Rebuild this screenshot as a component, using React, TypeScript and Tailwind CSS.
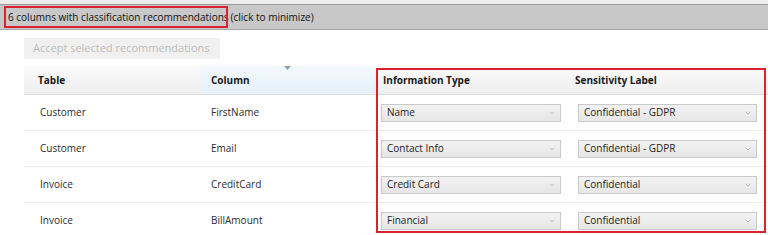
import { ChevronDown } from "lucide-react";

const rows = [
  { table: "Customer", column: "FirstName", info: "Name", label: "Confidential - GDPR" },
  { table: "Customer", column: "Email", info: "Contact Info", label: "Confidential - GDPR" },
  { table: "Invoice", column: "CreditCard", info: "Credit Card", label: "Confidential" },
  { table: "Invoice", column: "BillAmount", info: "Financial", label: "Confidential" },
];

function Dropdown({ value, width }: { value: string; width: string }) {
  return (
    <div
      className={`${width} h-[18px] flex items-center justify-between pl-[5px] pr-[4px] border border-[#c9c9c9] bg-gradient-to-b from-[#f3f3f3] to-[#e6e6e6] text-[#222]`}
    >
      <span>{value}</span>
      <ChevronDown size={8} strokeWidth={2} className="text-[#a0a0a0]" />
    </div>
  );
}

export default function App() {
  return (
    <div
      className="relative w-[768px] h-[235px] overflow-hidden bg-white text-[10px] text-[#2b2b2b]"
      style={{ fontFamily: '"Open Sans", "Noto Sans", sans-serif' }}
    >
      <div className="h-[4px] bg-[#ededed]" />
      <div className="h-[26px] flex items-center pl-[8px] bg-[#c8c8c8] border-t border-[#9c9c9c] border-b border-b-[#a8a8a8] text-[#111]">
        <span>6 columns with classification recommendations</span>
        <span className="ml-[2px]">(click to minimize)</span>
      </div>

      <div className="pl-[24px] pt-[8px]">
        <div className="w-[196px] h-[21px] flex items-center pl-[9px] bg-[#f0f0f0] text-[11px] text-[#bdbdbd]">
          Accept selected recommendations
        </div>
      </div>

      <div className="mt-[7px] ml-[24px]">
        <div className="relative h-[29px] flex items-center font-bold text-[#1a1a1a] bg-gradient-to-b from-[#fafafa] to-[#eeeeee] border-b border-[#dcdcdc]">
          <div className="w-[177px] pl-[14px]">Table</div>
          <div className="w-[176px] h-full flex items-center pl-[10px] bg-gradient-to-b from-[#f4f9fd] to-[#e4f0fa]">
            Column
          </div>
          <div className="w-[197px] pl-[6px]">Information Type</div>
          <div className="pl-[1px]">Sensitivity Label</div>
          <svg
            className="absolute left-[260px] top-[0px]"
            width="7"
            height="4"
            viewBox="0 0 7 4"
          >
            <path d="M0 0 L7 0 L3.5 4 Z" fill="#8aa0b4" />
          </svg>
        </div>

        {rows.map((r, i) => (
          <div key={i} className="h-[36px] flex items-center border-b border-[#ececec]">
            <div className="w-[177px] pl-[16px]">{r.table}</div>
            <div className="w-[180px] pl-[10px]">{r.column}</div>
            <div className="w-[197px]">
              <Dropdown value={r.info} width="w-[180px]" />
            </div>
            <Dropdown value={r.label} width="w-[179px]" />
          </div>
        ))}
      </div>

      {/* annotation boxes */}
      <div className="absolute left-[4px] top-[6px] w-[224px] h-[22px] border-2 border-[#d8232e]" />
      <div className="absolute left-[376px] top-[68px] w-[390px] h-[165px] border-2 border-[#d8232e]" />
    </div>
  );
}
